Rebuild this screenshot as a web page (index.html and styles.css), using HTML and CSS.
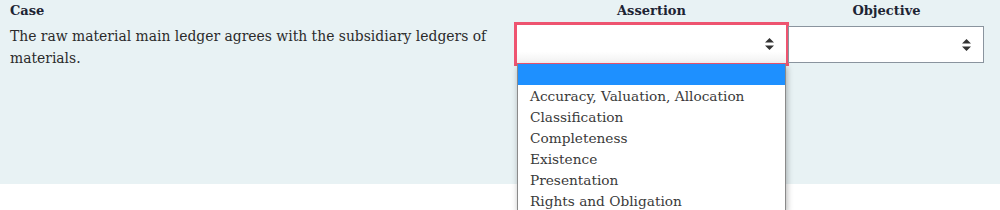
FILE: index.html
```html
<!DOCTYPE html>
<html lang="en">
<head>
    <meta charset="UTF-8">
    <meta name="viewport" content="width=device-width, initial-scale=1.0">
    <title>Assertions</title>
    <link rel="stylesheet" href="styles.css">
</head>
<body>

    <section class="question">
        <div class="qgrid">
            <div class="head head-case">Case</div>
            <div class="head">Assertion</div>
            <div class="head">Objective</div>

            <p class="case-text">The raw material main ledger agrees with the subsidiary ledgers of materials.</p>

            <!-- Select aperto -->
            <div class="select-wrap">
                <div class="fake-select focused">
                    <svg class="arrows" width="9" height="12" viewBox="0 0 9 12"><path d="M4.5 0 L9 4.5 H0 Z M4.5 12 L0 7.5 H9 Z" fill="#333"/></svg>
                </div>
                <ul class="options">
                    <li class="selected">&nbsp;</li>
                    <li>Accuracy, Valuation, Allocation</li>
                    <li>Classification</li>
                    <li>Completeness</li>
                    <li>Existence</li>
                    <li>Presentation</li>
                    <li>Rights and Obligation</li>
                </ul>
            </div>

            <div class="select-wrap">
                <div class="fake-select objective">
                    <svg class="arrows" width="9" height="12" viewBox="0 0 9 12"><path d="M4.5 0 L9 4.5 H0 Z M4.5 12 L0 7.5 H9 Z" fill="#333"/></svg>
                </div>
            </div>
        </div>
    </section>
    <div class="page-rest"></div>

</body>
</html>
```

FILE: styles.css
```css
body {
    font-family: "DejaVu Serif", serif;
    background-color: #ffffff;
    color: #2b2b2b;
    margin: 0;
    padding: 0;
}
.question {
    background-color: #e8f2f4;
    height: 184px;
    padding: 3px 0 0 10px;
    box-sizing: border-box;
}
.page-rest {
    height: 26px;
}
.qgrid {
    display: grid;
    grid-template-columns: 507px 271px 196px;
    grid-template-rows: 22px auto;
}
.head {
    font-family: "DejaVu Serif", serif;
    font-weight: bold;
    font-size: 13px;
    color: #1d2433;
    text-align: center;
    width: 269px;
    line-height: 16px;
}
.head:nth-child(3) {
    width: 197px;
}
.head-case {
    text-align: left;
}
.case-text {
    margin: 0;
    font-size: 13.9px;
    line-height: 22px;
    padding-right: 8px;
}
.select-wrap {
    position: relative;
}
.fake-select {
    background-color: #ffffff;
    height: 38px;
    width: 269px;
    box-sizing: border-box;
    display: flex;
    align-items: center;
    justify-content: flex-end;
    padding-right: 12px;
}
.fake-select.focused {
    outline: 3px solid #ee5470;
    background: linear-gradient(#ffffff 70%, #f1f1f1);
}
.fake-select.objective {
    width: 196px;
    height: 37px;
    margin-top: 1px;
    border: 1px solid #8a949e;
    padding-right: 12px;
}
.arrows {
    display: block;
}
.options {
    position: absolute;
    top: 39px;
    left: 0;
    width: 269px;
    max-height: 146px;
    overflow: hidden;
    box-sizing: border-box;
    margin: 0;
    padding: 0;
    list-style: none;
    background-color: #ffffff;
    border: 1px solid #8a8a8a;
    border-top: none;
    border-bottom: none;
    box-shadow: 1px 3px 6px rgba(0, 0, 0, 0.3);
    font-size: 13.7px;
    color: #3a3a3a;
}
.options li {
    height: 21px;
    line-height: 23px;
    padding-left: 12px;
    white-space: nowrap;
}
.options li.selected {
    background-color: #1e90ff;
}
```
